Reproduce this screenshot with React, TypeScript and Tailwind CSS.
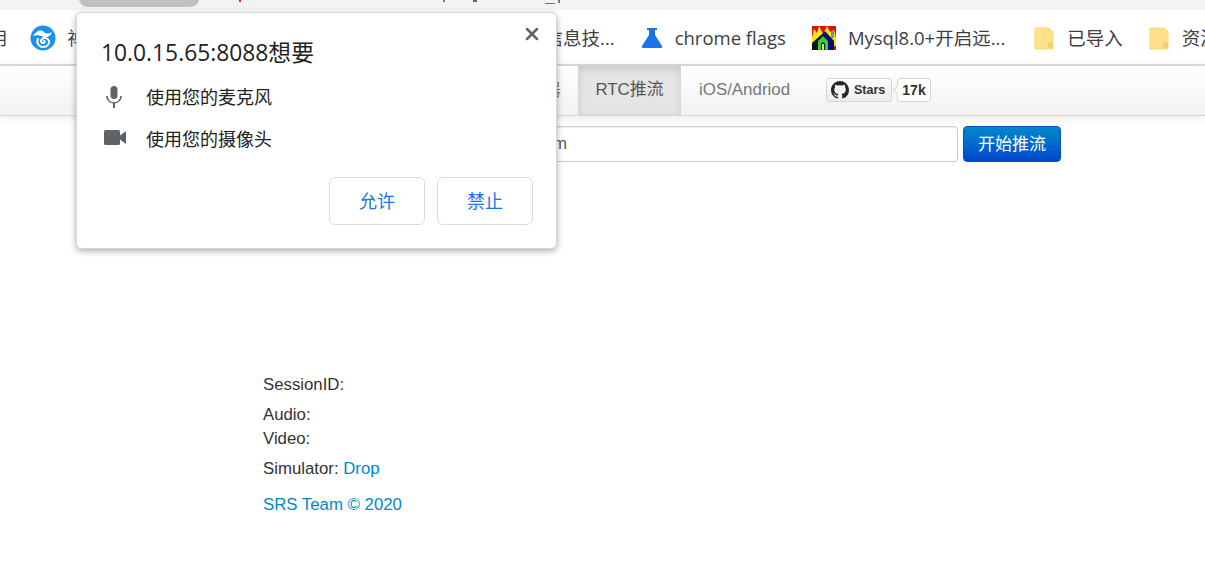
import React from 'react';
import { X } from 'lucide-react';

const CJK = "font-['Open_Sans','Noto_Sans_CJK_SC',sans-serif]";

const FolderIcon = () => (
    <svg width="21" height="23" viewBox="0 0 21 23" className="shrink-0">
        <path d="M1 1h14l4 4v17H1z" fill="#ffe08a" stroke="#fbd873" />
        <path d="M15 20v-3a1.5 1.5 0 0 1 3 0v3z" fill="none" stroke="#e8bd55" />
    </svg>
);

const SwirlIcon = () => (
    <svg width="26" height="26" viewBox="0 0 26 26" className="shrink-0">
        <circle cx="13" cy="13" r="12.5" fill="#1793ee" />
        <path d="M3 11c3-5 8-7 11-4 2 2 5 2 8 0-1 4-5 6-8 5-4-2-8-2-11-1z" fill="#fff" />
        <path d="M8 14c-2 4 1 8 5 8s7-3 6-6-5-4-7-2-1 4 1 4 2-2 1-2" fill="none" stroke="#fff" strokeWidth="2" strokeLinecap="round" />
    </svg>
);

const FlaskIcon = () => (
    <svg width="22" height="20" viewBox="0 0 22 20" className="shrink-0">
        <path d="M6 0h10v2h-2v5l7 11a1.3 1.3 0 0 1-1 2H2a1.3 1.3 0 0 1-1-2l7-11V2H6z" fill="#1a73e8" />
    </svg>
);

const MysqlIcon = () => (
    <svg width="24" height="24" viewBox="0 0 24 24" className="shrink-0">
        <rect width="24" height="24" fill="#d9140e" />
        <path d="M0 12l2-9 3 4 2-7 4 8 4-8 3 6 4-2 2 8v8H0z" fill="#f7e617" />
        <path d="M13 5l9 10v9H4v-9z" fill="#0b0b78" />
        <path d="M0 24v-7l9-8 1 15z" fill="#111" />
        <path d="M6 24V15l5-5 5 5v9h-3v-6l-2-2-2 2v6z" fill="#2fd12f" />
        <rect x="10" y="18" width="2" height="6" fill="#f7e617" />
        <rect x="19" y="5" width="3" height="7" fill="#8a8a8a" />
    </svg>
);

const GithubIcon = () => (
    <svg width="18" height="18" viewBox="0 0 16 16" className="shrink-0" fill="#24292e">
        <path d="M8 0C3.58 0 0 3.58 0 8c0 3.54 2.29 6.53 5.47 7.59.4.07.55-.17.55-.38 0-.19-.01-.82-.01-1.49-2.01.37-2.53-.49-2.69-.94-.09-.23-.48-.94-.82-1.13-.28-.15-.68-.52-.01-.53.63-.01 1.08.58 1.23.82.72 1.21 1.87.87 2.33.66.07-.52.28-.87.51-1.07-1.78-.2-3.64-.89-3.64-3.95 0-.87.31-1.59.82-2.15-.08-.2-.36-1.02.08-2.12 0 0 .67-.21 2.2.82.64-.18 1.32-.27 2-.27s1.36.09 2 .27c1.53-1.04 2.2-.82 2.2-.82.44 1.1.16 1.92.08 2.12.51.56.82 1.27.82 2.15 0 3.07-1.87 3.75-3.65 3.95.29.25.54.73.54 1.48 0 1.07-.01 1.93-.01 2.2 0 .21.15.46.55.38A8.01 8.01 0 0 0 16 8c0-4.42-3.58-8-8-8z" />
    </svg>
);

const MicIcon = () => (
    <svg width="18" height="22" viewBox="0 0 18 22" fill="#5f6368">
        <rect x="5.5" y="0" width="7" height="13" rx="3.5" />
        <path d="M1 10h1.7a6.3 6.3 0 0 0 12.6 0H17a8 8 0 0 1-7 7.4V22H8v-4.6A8 8 0 0 1 1 10z" />
    </svg>
);

const CameraIcon = () => (
    <svg width="22" height="15" viewBox="0 0 22 15" fill="#5f6368" className="-mt-[4px] -ml-[1px]">
        <rect x="0" y="0" width="16" height="15" rx="1.5" />
        <path d="M16 5.5L22 1v13l-6-4.5z" />
    </svg>
);

const Bookmark = ({ icon, label, className }: { icon: React.ReactNode; label: string; className: string }) => (
    <div className={`flex items-center gap-3 shrink-0 ${className}`}>
        {icon}
        <span className="whitespace-nowrap">{label}</span>
    </div>
);

const PermissionRow = ({ icon, label }: { icon: React.ReactNode; label: string }) => (
    <div className="flex items-center h-[42px]">
        <div className="w-[45px] pl-[4px] flex justify-start">{icon}</div>
        <span className="text-[18px] text-[#202124]">{label}</span>
    </div>
);

export default function App() {
    return (
        <div className="relative w-[1205px] h-[586px] overflow-hidden bg-white font-['Liberation_Sans',sans-serif]">
            {/* browser tab strip, only the bottom of the tab text is showing */}
            <div className="flex items-start h-[10px] bg-[#f1f3f4] overflow-hidden">
                <div className="w-[120px] h-[17px] -mt-[10px] ml-[79px] shrink-0 rounded-full bg-[#bdc1c0]" />
                <div className="w-[2px] h-[2px] ml-[40px] shrink-0 bg-[#d93025]" />
                <div className="w-[2px] h-[2px] ml-[202px] shrink-0 bg-[#70757a]" />
                <div className="w-[4px] h-[2px] ml-[28px] shrink-0 bg-[#6b6468]" />
                <div className="w-[10px] h-[1px] mt-[3px] ml-[68px] shrink-0 bg-[#70757a]" />
                <div className="w-[2px] h-[3px] ml-[3px] shrink-0 bg-[#70757a]" />
            </div>

            {/* bookmarks bar */}
            <div className={`flex items-center h-[56px] pt-[2px] bg-white border-b-2 border-[#dcdcdc] text-[18.5px] text-[#3c4043] overflow-hidden ${CJK}`}>
                <span className="-ml-[11px] shrink-0">用</span>
                <Bookmark className="ml-[22px]" icon={<SwirlIcon />} label="禅道" />
                <span className="ml-[440px] shrink-0 whitespace-nowrap">信息技...</span>
                <Bookmark className="ml-[26px]" icon={<FlaskIcon />} label="chrome flags" />
                <Bookmark className="ml-[26px]" icon={<MysqlIcon />} label="Mysql8.0+开启远..." />
                <Bookmark className="ml-[29px]" icon={<FolderIcon />} label="已导入" />
                <Bookmark className="ml-[26px]" icon={<FolderIcon />} label="资源" />
            </div>

            {/* navbar */}
            <div className="flex items-stretch h-[50px] bg-gradient-to-b from-white to-[#f2f2f2] border-b border-[#d4d4d4] shadow-[0_1px_10px_rgba(0,0,0,0.1)] text-[16.9px] text-[#777777]">
                <span className={`ml-[544px] w-[34px] flex items-center pb-[1px] ${CJK}`}>器</span>
                <span className="w-[103px] flex items-center justify-center pb-[1px] bg-[#e5e5e5] text-[#555555] shadow-[inset_0_3px_8px_rgba(0,0,0,0.125)] font-['Liberation_Sans','Noto_Sans_CJK_SC',sans-serif]">RTC推流</span>
                <span className="w-[145px] flex items-center pl-[18px] pb-[1px]">iOS/Andriod</span>
                <div className="flex items-center pb-[1px] text-[#333333] font-bold">
                    <div className="flex items-center gap-[5px] h-[24px] w-[66px] pl-[4px] rounded-[3px] border border-[#d5d5d5] bg-gradient-to-b from-[#fcfcfc] to-[#eeeeee] text-[12.5px]">
                        <GithubIcon />
                        <span>Stars</span>
                    </div>
                    <div className="relative flex items-center justify-center h-[24px] w-[34px] ml-[5px] rounded-[3px] border border-[#d5d5d5] bg-white text-[14px]">
                        <div className="absolute -left-[4px] w-[6px] h-[6px] rotate-45 bg-white border-l border-b border-[#d5d5d5]" />
                        <span className="relative">17k</span>
                    </div>
                </div>
            </div>

            {/* publish form */}
            <div className="flex gap-[5px] mt-[10px] ml-[263px] w-[798px]">
                <div className="flex items-center justify-end w-[695px] h-[36px] pr-[390px] rounded-[4px] bg-white border border-[#cccccc] shadow-[inset_0_1px_1px_rgba(0,0,0,0.075)] text-[16.8px] text-[#555555]">
                    m
                </div>
                <button className={`w-[98px] h-[36px] rounded-[4px] bg-gradient-to-b from-[#0088cc] to-[#0044cc] border border-[#0055bb] text-white text-[17px] ${CJK}`}>
                    开始推流
                </button>
            </div>

            {/* stats */}
            <div className="ml-[263px] mt-[211px] text-[16.8px] leading-[24px] text-[#333333]">
                <div>SessionID:</div>
                <div className="mt-[6px]">Audio:</div>
                <div>Video:</div>
                <div className="mt-[6px]">
                    Simulator: <a className="text-[#0088cc]">Drop</a>
                </div>
                <div className="mt-[12px] text-[#0088cc]">SRS Team © 2020</div>
            </div>

            {/* permission dialog */}
            <div className={`absolute left-[76px] top-[12px] w-[481px] h-[237px] rounded-[6px] bg-white border border-[#d8d8d8] shadow-[0_2px_6px_rgba(60,64,67,0.45)] pl-[24px] pr-[23px] ${CJK}`}>
                <button className="absolute right-[14px] top-[11px] text-[#5f6368]">
                    <X size={20} strokeWidth={3} />
                </button>
                <div className="pt-[24px] text-[22.8px] leading-[32px] text-[#202124] whitespace-nowrap">10.0.15.65:8088想要</div>
                <div className="mt-[7px]">
                    <PermissionRow icon={<MicIcon />} label="使用您的麦克风" />
                    <PermissionRow icon={<CameraIcon />} label="使用您的摄像头" />
                </div>
                <div className="flex justify-end gap-[12px] mt-[17px]">
                    <button className="w-[96px] h-[48px] rounded-[6px] border border-[#dadce0] bg-white text-[18px] text-[#1a73e8]">允许</button>
                    <button className="w-[96px] h-[48px] rounded-[6px] border border-[#dadce0] bg-white text-[18px] text-[#1a73e8]">禁止</button>
                </div>
            </div>
        </div>
    );
}
